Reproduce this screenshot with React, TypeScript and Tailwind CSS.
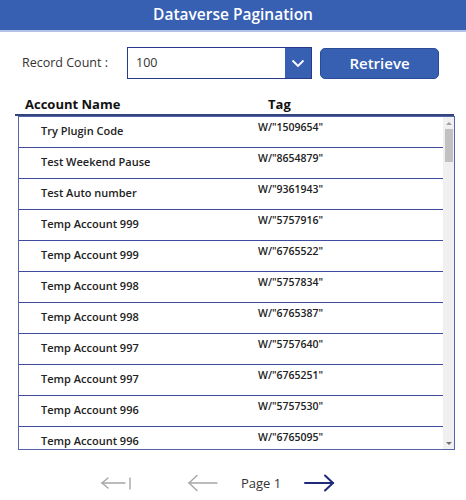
import React from 'react';

// Accounts currently loaded in the gallery
const ROWS: { name: string; tag: string }[] = [
  { name: 'Try Plugin Code', tag: 'W/"1509654"' },
  { name: 'Test Weekend Pause', tag: 'W/"8654879"' },
  { name: 'Test Auto number', tag: 'W/"9361943"' },
  { name: 'Temp Account 999', tag: 'W/"5757916"' },
  { name: 'Temp Account 999', tag: 'W/"6765522"' },
  { name: 'Temp Account 998', tag: 'W/"5757834"' },
  { name: 'Temp Account 998', tag: 'W/"6765387"' },
  { name: 'Temp Account 997', tag: 'W/"5757640"' },
  { name: 'Temp Account 997', tag: 'W/"6765251"' },
  { name: 'Temp Account 996', tag: 'W/"5757530"' },
  { name: 'Temp Account 996', tag: 'W/"6765095"' },
  { name: 'Temp Account 995', tag: 'W/"5757421"' },
];

const FirstPageIcon = () => (
  <svg width="32" height="16" viewBox="0 0 32 16" fill="none" stroke="#a6a6a6" strokeWidth="1.4" strokeLinecap="round">
    <path d="M2 8 H25" />
    <path d="M8 3 L2 8 L8 13" />
    <path d="M30 3 V14" />
  </svg>
);

const PrevIcon = () => (
  <svg width="32" height="20" viewBox="0 0 32 20" fill="none" stroke="#a6a6a6" strokeWidth="1.4" strokeLinecap="round">
    <path d="M2 10 H30" />
    <path d="M10 2.5 L2 10 L10 17.5" />
  </svg>
);

const NextIcon = () => (
  <svg width="32" height="20" viewBox="0 0 32 20" fill="none" stroke="#1f2a7a" strokeWidth="2" strokeLinecap="round">
    <path d="M2 10 H30" />
    <path d="M22 2.5 L30 10 L22 17.5" />
  </svg>
);

export default function App() {
  return (
    <div className="w-[466px] h-[500px] bg-white overflow-hidden text-[#333333]" style={{ fontFamily: '"Open Sans", "Noto Sans", sans-serif' }}>
      <div className="h-[32px] bg-[#3860b2] border-b-2 border-[#b3c2e6] flex items-center justify-center">
        <span className="text-white text-[15.5px] font-semibold">Dataverse Pagination</span>
      </div>

      <div className="flex items-center mt-[15px] h-[32px]">
        <span className="ml-[22px] w-[105px] text-[12.5px]">Record Count :</span>
        <div className="w-[185px] h-[32px] border border-[#283a8a] flex">
          <div className="flex-1 flex items-center pl-[8px] text-[12.5px]">100</div>
          <div className="w-[26px] bg-[#3860b2] flex items-center justify-center">
            <svg width="14" height="9" viewBox="0 0 14 9" fill="none" stroke="white" strokeWidth="1.8">
              <path d="M1.5 1.5 L7 7 L12.5 1.5" />
            </svg>
          </div>
        </div>
        <button className="ml-[8px] w-[119px] h-[31px] rounded-[5px] bg-[#3860b2] border border-[#2a4b98] text-white text-[15px] font-semibold flex items-center justify-center">
          Retrieve
        </button>
      </div>

      <div className="flex items-end h-[35px] text-[13px] font-bold text-[#111111]">
        <span className="ml-[25px] w-[243px]">Account Name</span>
        <span>Tag</span>
      </div>
      <div className="ml-[15px] w-[439px] h-[2px] bg-[#34447f]" />

      <div className="ml-[18px] w-[437px] h-[334px] border border-[#5565a8] flex">
        <div className="flex-1 overflow-hidden">
          {ROWS.map((row, i) => (
            <div key={i} className="h-[31px] border-b border-[#3d4c9c] flex font-semibold text-[#222222]">
              <span className="ml-[22px] w-[217px] pt-[6px] text-[11px] leading-[16px]">{row.name}</span>
              <span className="pt-[2px] text-[10.5px] leading-[16px]">{row.tag}</span>
            </div>
          ))}
        </div>
        <div className="w-[11px] bg-[#f0f0f0] flex flex-col items-center">
          <div className="h-[12px] flex items-center justify-center">
            <div className="w-0 h-0 border-l-[3px] border-r-[3px] border-b-[3px] border-l-transparent border-r-transparent border-b-[#a0a0a0]" />
          </div>
          <div className="w-[8px] h-[33px] bg-[#c1c1c1]" />
          <div className="flex-1" />
          <div className="h-[12px] flex items-center justify-center">
            <div className="w-0 h-0 border-l-[3px] border-r-[3px] border-t-[3px] border-l-transparent border-r-transparent border-t-[#707070]" />
          </div>
        </div>
      </div>

      <div className="flex items-center mt-[23px] h-[20px]">
        <div className="ml-[100px]"><FirstPageIcon /></div>
        <div className="ml-[55px]"><PrevIcon /></div>
        <span className="ml-[22px] text-[13px] leading-[20px] text-[#333333]">Page 1</span>
        <div className="ml-[22px]"><NextIcon /></div>
      </div>
    </div>
  );
}
